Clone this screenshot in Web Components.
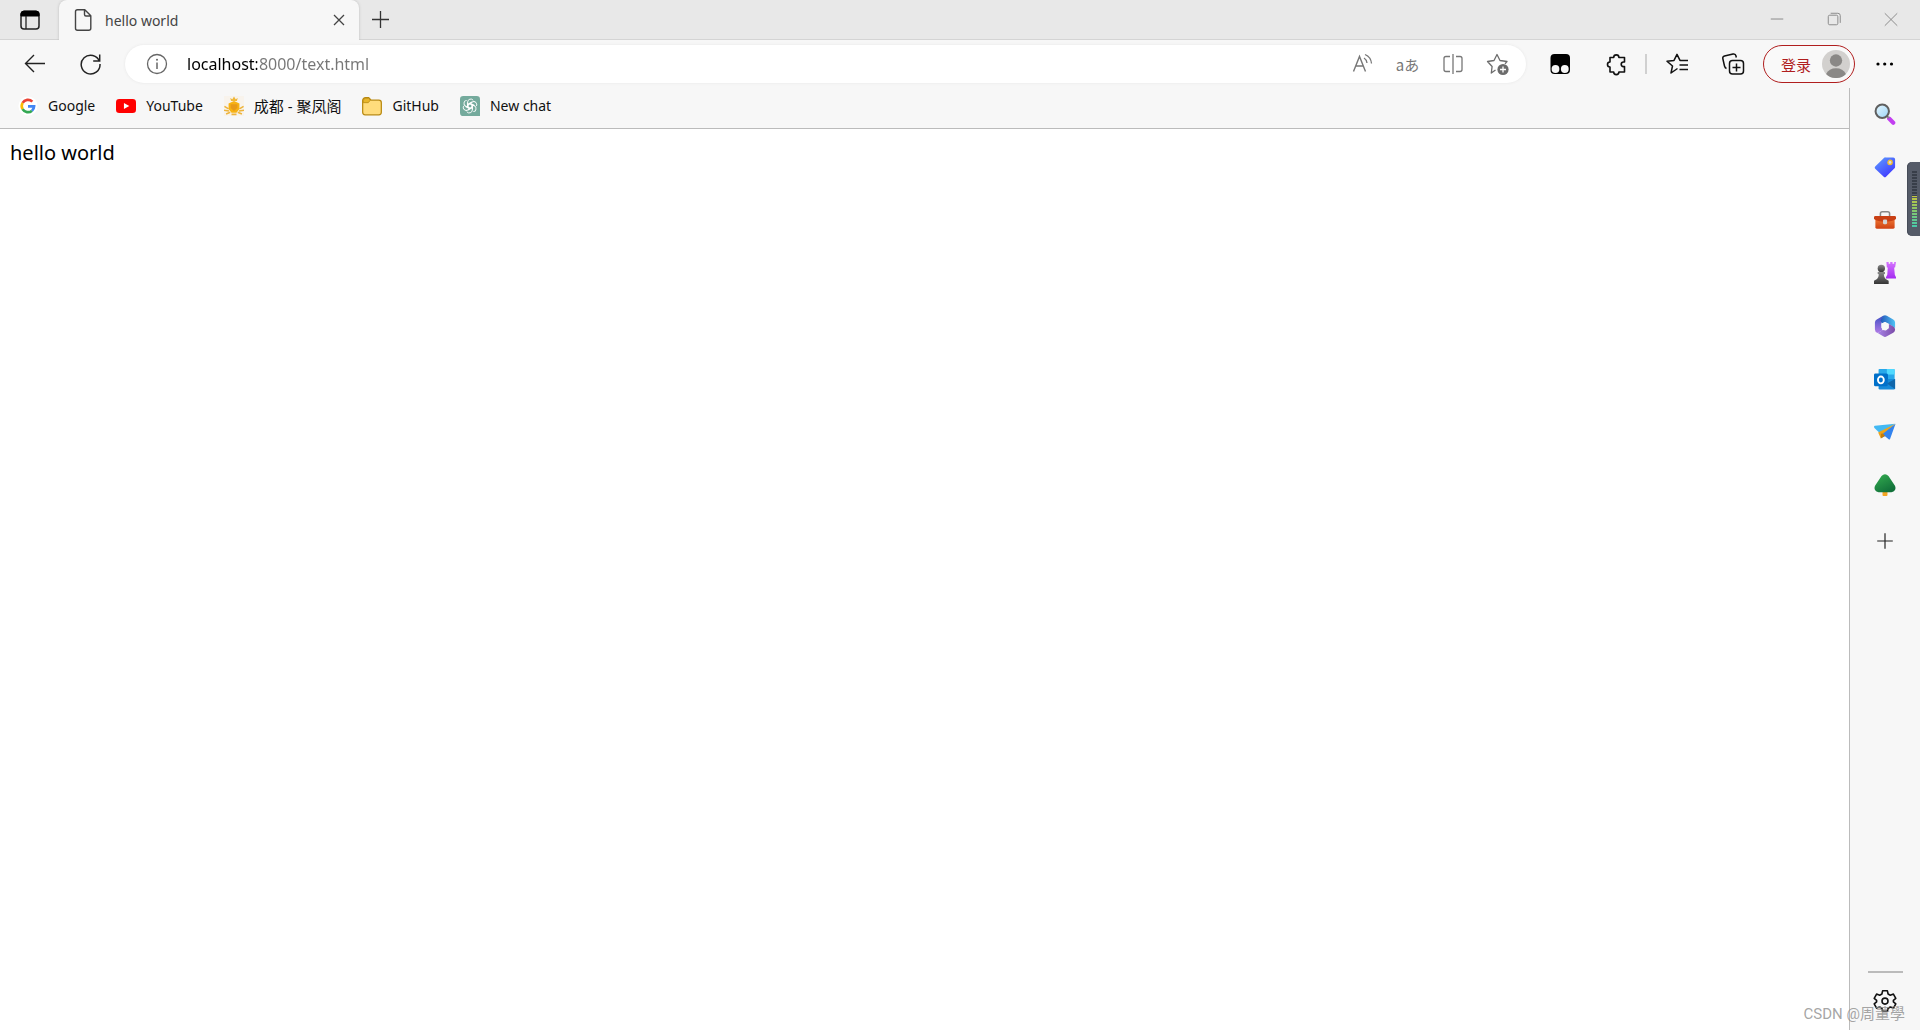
<!DOCTYPE html>
<html lang="zh-CN">
<head>
<meta charset="utf-8">
<title>hello world</title>
<style>
html, body { height: 100%; }
body { margin: 0; font-family: "Noto Sans", "Noto Sans CJK SC", sans-serif; color: #1b1b1b; overflow: hidden; }
</style>
</head>
<body>
<browser-window>
  <title-bar slot="title"><browser-tab>hello world</browser-tab></title-bar>
  <tool-bar slot="tools"></tool-bar>
  <bookmark-bar slot="bookmarks">
    <bookmark-link icon="google">Google</bookmark-link>
    <bookmark-link icon="youtube">YouTube</bookmark-link>
    <bookmark-link icon="crown" lang="zh">成都 - 聚凤阁</bookmark-link>
    <bookmark-link icon="folder">GitHub</bookmark-link>
    <bookmark-link icon="chat">New chat</bookmark-link>
  </bookmark-bar>
  <page-view slot="page">hello world</page-view>
  <side-bar slot="side"></side-bar>
  <level-meter slot="overlay"></level-meter>
  <water-mark slot="overlay">CSDN @周董學</water-mark>
</browser-window>

<script>
const ICONS = {
  panes: '<rect x="3" y="3.5" width="18" height="17.5" rx="3" fill="none" stroke="#222" stroke-width="1.5"/><path d="M3 8V6a3 3 0 0 1 3-3h12a3 3 0 0 1 3 3v2z" fill="#000" stroke="#000"/><path d="M8 8v13" stroke="#222" stroke-width="1.3"/>',
  file: '<path d="M6.500 1.700h7.300l6 6v12.600a2 2 0 0 1-2 2H6.500a2 2 0 0 1-2-2V3.700a2 2 0 0 1 2-2zM13.500 2v4.500a1.500 1.500 0 0 0 1.500 1.500h4.500" fill="none" stroke="#444" stroke-width="1.4" stroke-linejoin="round"/>',
  close: '<path d="M7 7l10 10M17 7l-10 10" stroke="#444" stroke-width="1.3"/>',
  add: '<path d="M12.500 3v17M4 11.500h17" stroke="#333" stroke-width="1.300"/>',
  min: '<path d="M5 11.500h13" stroke="#888" stroke-width="1"/>',
  max: '<rect x="5.500" y="7.500" width="10" height="10" rx="1.500" fill="none" stroke="#888"/><path d="M8 5.500h7.500a2.500 2.500 0 0 1 2.500 2.500v7.500" fill="none" stroke="#888"/>',
  quit: '<path d="M5 5.500l13 13M18 5.500l-13 13" stroke="#888" stroke-width="1"/>',
  back: '<path d="M22 11.500H2.500M11 3L2.500 11.500 11 20" fill="none" stroke="#222" stroke-width="1.400"/>',
  reload: '<path d="M20.500 9.500A9.400 9.400 0 1 0 21 12M20.700 2.500v6.500h-6.500" fill="none" stroke="#222" stroke-width="1.500"/>',
  info: '<circle cx="12" cy="12" r="9.500" fill="none" stroke="#666" stroke-width="1.300"/><path d="M12 10.500v6.500" stroke="#666" stroke-width="1.500"/><circle cx="12" cy="7.700" r="1" fill="#666"/>',
  read: '<path d="M2.500 19.500L8.500 4.500l6 15M4.700 14h7.600" fill="none" stroke="#777" stroke-width="1.400"/><path d="M13 6q2.800 1.800 3 5M14 2.500q6 2.500 6.500 9" fill="none" stroke="#777" stroke-width="1.300"/>',
  split: '<path d="M9 4.500H5a2 2 0 0 0-2 2v11a2 2 0 0 0 2 2H9M15 4.500h4a2 2 0 0 1 2 2v11a2 2 0 0 1-2 2h-4M12 2v20" fill="none" stroke="#777" stroke-width="1.300"/>',
  staradd: '<path d="M9.500 18L5.300 21l.8-6.500L1.500 9.500l6.500-1L11 2.500l3 6 7 1-2 2.300" fill="none" stroke="#6c6c6c" stroke-width="1.300" stroke-linejoin="round"/><circle cx="17" cy="17.500" r="5.600" fill="#6c6c6c"/><path d="M17 14.500v6M14 17.500h6" stroke="#fff" stroke-width="1.300"/>',
  monkey: '<rect x="2.500" y="2" width="19.500" height="20" rx="4" fill="#000"/><circle cx="7.500" cy="17" r="3.900" fill="#f7f7f7"/><circle cx="16.800" cy="17" r="3.900" fill="#f7f7f7"/>',
  puzzle: '<path d="M6 5.500h3.700a2.600 2.600 0 0 1 5.200 0H20.500V10h-1a2.300 2.300 0 0 0 0 4.600h1V20h-5.600a2.600 2.600 0 0 1-5.200 0H6v-5a2.500 2.500 0 0 1 0-5z" fill="none" stroke="#111" stroke-width="1.600" stroke-linejoin="round"/>',
  favs: '<path d="M12.500 16.500L6 21l1.500-7L2 9.200l7-.8 3-6 3 6h8M14.500 13H23M14.500 17.500H23" fill="none" stroke="#111" stroke-width="1.500" stroke-linejoin="round"/>',
  collect: '<rect x="8.500" y="8.500" width="14" height="13.500" rx="3" fill="none" stroke="#111" stroke-width="1.500"/><path d="M15.500 11.500v8M11.500 15.500h8M5.500 16.500Q4 16 3.500 14L1.800 6.500Q1.500 4.500 3.500 4L12 2q2.500-.5 3 2l.3 1.500" fill="none" stroke="#111" stroke-width="1.500"/>',
  dots: '<circle cx="5" cy="12" r="1.600"/><circle cx="11.700" cy="12" r="1.600"/><circle cx="18.500" cy="12" r="1.600"/>',
  person: '<circle cx="12" cy="12" r="12" fill="#d2d0ce"/><circle cx="12" cy="9" r="5.300" fill="#8a8886"/><path d="M3.500 20.500Q6 15.700 12 15.700t8.500 4.800A12 12 0 0 1 3.500 20.500z" fill="#8a8886"/>',
  google: '<circle cx="12" cy="12" r="11.500" fill="#fff"/><g fill="none" stroke-width="3.200"><path d="M5.500 8.300A7.400 7.400 0 0 1 17.200 6.800" stroke="#ea4335"/><path d="M5.500 8.300a7.400 7.400 0 0 0 0 7.400" stroke="#fbbc05"/><path d="M5.500 15.700a7.400 7.400 0 0 0 11.300 1.900" stroke="#34a853"/><path d="M16.800 17.600a7.400 7.400 0 0 0 2.500-5.200H12" stroke="#4285f4"/></g>',
  youtube: '<rect x="0" y="3.500" width="24" height="17" rx="4" fill="#f00"/><path d="M9.500 8.500l6.500 3.500-6.500 3.500z" fill="#fff"/>',
  crown: '<rect width="24" height="24" fill="#f8f3ec"/><path d="M7.500 2.500L10 4l2-3.500L14 4l2.500-1.500L15.500 6h-7z" fill="#f0b83a"/><path d="M5.500 9L12 6l6.500 3v6.500L15 20H9l-3.500-4.500z" fill="#f7b213"/><path d="M8 10h8v4.500L12 18l-4-3.500z" fill="#e79a18"/><path d="M.5 12.500l5 3M0 17l6 1M2.500 21.500l5-2M23.500 12.500l-5 3M24 17l-6 1M21.500 21.500l-5-2M9 22h6" stroke="#edb43c" stroke-width="1.900"/>',
  folder: '<path d="M.8 5.500A3.500 3.500 0 0 1 4.300 2H8l3 3h9.200a3 3 0 0 1 3 3v11.500a3 3 0 0 1-3 3H3.800a3 3 0 0 1-3-3z" fill="#ffdc7c" stroke="#b98a12" stroke-width="1.500"/><path d="M1.500 8V5.500a3 3 0 0 1 3-2.800h3.200L10 5 7.500 8z" fill="#e8b62c" stroke="#b98a12"/>',
  chat: '<path d="M4 0h16a4 4 0 0 1 4 4v20H4a4 4 0 0 1-4-4V4a4 4 0 0 1 4-4z" fill="#74aa9c"/><g fill="none" stroke="#fff" stroke-width="1.100">' +
    [0, 60, 120, 180, 240, 300].map(a => '<path d="M14.400 13.300L12 14.800l-2.800-1.500V7.200a3.700 3.700 0 0 1 6.700-2M9.300 10l4.800-2.800" transform="rotate(' + a + ' 12 12)"/>').join('') + '</g>',
  search: '<defs><linearGradient id="g" x2="1" y2="1"><stop stop-color="#e6f7ff"/><stop offset="1" stop-color="#9cd4f7"/></linearGradient></defs><path d="M16.500 17l4.500 4.500" stroke="#c23ff0" stroke-width="4.500" stroke-linecap="round"/><path d="M14 14l2.500 2.500" stroke="#888" stroke-width="2"/><circle cx="9" cy="9" r="7.300" fill="url(#g)" stroke="#606060" stroke-width="2.200"/>',
  tag: '<defs><linearGradient id="g" x2=".7" y2="1"><stop stop-color="#5ea0ff"/><stop offset="1" stop-color="#4038ff"/></linearGradient></defs><path d="M12.500 1.500H21a2 2 0 0 1 2 2V12a2 2 0 0 1-.6 1.400l-9.300 9.200a1.800 1.800 0 0 1-2.500 0L1.300 14a1.800 1.800 0 0 1 0-2.500l9.500-9.300A2 2 0 0 1 12.500 1.500z" fill="url(#g)"/><circle cx="17.500" cy="7" r="2.300" fill="#ddd" stroke="#f4bc2b" stroke-width="1.500"/>',
  toolbox: '<defs><linearGradient id="g" x2="0" y2="1"><stop stop-color="#f07a35"/><stop offset="1" stop-color="#cf4213"/></linearGradient></defs><path d="M7 8V5a2 2 0 0 1 2-2h6a2 2 0 0 1 2 2V8" fill="none" stroke="#888" stroke-width="1.700"/><path d="M1.500 10h21v10a1.500 1.500 0 0 1-1.500 1.500H3A1.500 1.500 0 0 1 1.500 20z" fill="url(#g)"/><path d="M1.500 7.500h21a1.500 1.500 0 0 1 1.500 1.500v2q-4 3-12 3T0 11V9a1.500 1.500 0 0 1 1.500-1.500z" fill="#c94015"/><rect x="9.800" y="11.500" width="4.500" height="5" rx="1.200" fill="#d4d4d4"/>',
  chess: '<defs><linearGradient id="g" x2="0" y2="1"><stop stop-color="#8a8a8a"/><stop offset="1" stop-color="#343434"/></linearGradient><linearGradient id="h" x2="0" y2="1"><stop stop-color="#d574ff"/><stop offset="1" stop-color="#a42cf0"/></linearGradient></defs><path d="M13.500 0H16v2h1.700V0h2.500v2H22V0h2l-1 6h-1l.7 8 1.300 2.500v1.500H13v-1.500l1.500-2.500.5-8h-1z" fill="url(#h)"/><circle cx="8" cy="7" r="4" fill="url(#g)"/><path d="M4 10.800h8v2l-1.300.8q.3 3.400 2 4.900l3.300 2V24H0v-3.500l3.300-2q1.700-1.500 2-4.900L4 12.800z" fill="url(#g)"/>',
  office: '<defs><linearGradient id="g" x2="0" y2="1"><stop stop-color="#3f4fc4"/><stop offset="1" stop-color="#b07be6"/></linearGradient><linearGradient id="h" x2="1"><stop stop-color="#2456b8"/><stop offset="1" stop-color="#4fc3f5"/></linearGradient><linearGradient id="i" x2="1"><stop stop-color="#a884e6"/><stop offset="1" stop-color="#7a4ba8"/></linearGradient></defs><path d="M10 .8L3 4.800a4 4 0 0 0-2 3.500v7.500a4 4 0 0 0 3 3.800l5-2.800-1-8z" fill="url(#g)"/><path d="M10 .8a4 4 0 0 1 4 0l7 4a4 4 0 0 1 2 3.500v6L16 9.500 12 7.500 8.500 9 7 6z" fill="url(#h)"/><path d="M4 19.600l5.500-3.200 3.500.6 3-2.500V9.500l5 3a4 4 0 0 1 2 3.500 4 4 0 0 1-2 3.300l-7 4a4 4 0 0 1-4 0z" fill="url(#i)"/><path d="M12 7.700l4 2.200v4.300l-4 2.300-4-2.300V9.900z" fill="#f7f7f7"/>',
  outlook: '<path d="M6 1h15.500a1 1 0 0 1 1 1v10H5V2a1 1 0 0 1 1-1z" fill="#28a8ea"/><path d="M14 1h7.500a1 1 0 0 1 1 1v5H14z" fill="#50d9ff"/><path d="M6 7h9v6H6z" fill="#0364b8"/><path d="M5 12h18v10a1.500 1.500 0 0 1-1.500 1.500h-15A1.500 1.500 0 0 1 5 22z" fill="#168ad9"/><path d="M23 12v11l-9-6z" fill="#1066aa"/><rect x="0" y="6" width="15" height="14" rx="1.500" fill="#0070c9"/><ellipse cx="7.500" cy="13" rx="3.200" ry="3.700" fill="none" stroke="#fff" stroke-width="2"/>',
  plane: '<path d="M0 6.500q0-1 1-1.200L23 3 7 14 .5 7.500z" fill="#43b9f3"/><path d="M23.500 3L17.500 19.500q-.6 1-1.500.3L12 16.500l-4 2 1.500-6z" fill="#3383ee"/><path d="M23.500 3L4.500 12.500l3 6.500 2.200-5z" fill="#eda41c"/><path d="M7.500 19v-5l2.200-.5L12 16z" fill="#c77d08"/>',
  tree: '<defs><linearGradient id="g" x2=".6" y2="1"><stop stop-color="#35ae50"/><stop offset="1" stop-color="#12713a"/></linearGradient></defs><path d="M9.300 18h5.400v5a1 1 0 0 1-1 1h-3.400a1 1 0 0 1-1-1z" fill="#f5a623"/><path d="M12 .2q2 0 3.800 2L22.700 12.500q1.500 3 0 5.300-1 2-3.700 2H5q-2.700 0-3.700-2-1.500-2.300 0-5.300L8.200 2.200Q10 .2 12 .2z" fill="url(#g)"/>',
  plus: '<path d="M12 3.500v17M3.500 12h17" stroke="#222" stroke-width="1.300"/>',
  gear: '<path d="M9.600 1.800h4.800l.7 3.200 2.200 1.200 3.100-1.100 2.400 4.200-2.400 2v1.600l2.400 2-2.400 4.200-3.100-1.100-2.200 1.200-.7 3.200H9.600l-.7-3.200-2.200-1.200-3.100 1.100-2.400-4.200 2.400-2v-1.600l-2.400-2 2.400-4.200 3.100 1.100L8.900 5z" fill="none" stroke="#111" stroke-width="1.600" stroke-linejoin="round"/><circle cx="12" cy="12.100" r="3" fill="none" stroke="#111" stroke-width="1.600"/>'
};

const define = (name, html, ready) => customElements.define(name, class extends HTMLElement {
  constructor() {
    super();
    const t = document.createElement('template');
    t.innerHTML = html;
    this.attachShadow({ mode: 'open' }).append(t.content.cloneNode(true));
  }
  connectedCallback() { if (ready) ready(this, this.shadowRoot); }
});

define('ui-icon', '<style>:host{display:block;width:var(--icon,24px);height:var(--icon,24px);flex:none}svg{display:block;width:100%;height:100%}</style><svg viewBox="0 0 24 24" aria-hidden="true"></svg>',
  (el, root) => { root.querySelector('svg').innerHTML = ICONS[el.getAttribute('name')]; });

define('icon-button', `<style>
:host{display:flex;width:56px;height:38px;flex:none}
button{all:unset;flex:1;display:flex;align-items:center;justify-content:center;font:15px "Noto Sans CJK JP",sans-serif;color:#777}
</style><button type="button"><slot></slot></button>`,
  (el, root) => root.querySelector('button').setAttribute('aria-label', el.getAttribute('label')));

define('browser-window', `<style>
:host{display:flex;flex-direction:column;min-height:100vh;position:relative;background:#f7f7f7}
.body{flex:1;display:flex}
.main{flex:1;min-width:0;display:flex;flex-direction:column}
</style><slot name="title"></slot><slot name="tools"></slot>
<div class="body"><div class="main"><slot name="bookmarks"></slot><slot name="page"></slot></div><slot name="side"></slot></div>
<slot name="overlay"></slot>`);

define('title-bar', `<style>
:host{display:flex;height:40px;background:#e8e8e8;box-shadow:inset 0 -1px #d4d4d4}
.gap{flex:1}
icon-button{height:39px;width:57px}
.lead{width:59px}
.new{width:42px}
.win{--icon:23px}
</style>
<icon-button class="lead" label="标签操作"><ui-icon name="panes"></ui-icon></icon-button>
<slot></slot>
<icon-button class="new" label="新建标签页"><ui-icon name="add"></ui-icon></icon-button>
<div class="gap"></div>
<icon-button class="win" label="最小化"><ui-icon name="min"></ui-icon></icon-button>
<icon-button class="win" label="还原"><ui-icon name="max"></ui-icon></icon-button>
<icon-button class="win" label="关闭"><ui-icon name="quit"></ui-icon></icon-button>`);

define('browser-tab', `<style>
:host{display:flex;align-items:center;width:300px;box-sizing:border-box;height:40px;padding-left:12px;background:#f7f7f7;border-radius:8px 8px 0 0;box-shadow:0 0 3px #bbb;clip-path:inset(0 -4px 0 -4px);font-size:14px;color:#444}
span{flex:1;margin-left:10px}
icon-button{width:40px}
</style><ui-icon name="file"></ui-icon><span><slot></slot></span><icon-button label="关闭标签页"><ui-icon name="close"></ui-icon></icon-button>`);

define('tool-bar', `<style>
:host{display:flex;align-items:center;height:48px;padding:0 7px;box-sizing:border-box;background:#f7f7f7}
.rule{width:2px;height:20px;background:#d0d0d0;margin:0 2px 0 1px}
address-bar{flex:1;margin:0 6px}
login-button{margin:0 2px}
</style>
<icon-button label="返回"><ui-icon name="back"></ui-icon></icon-button>
<icon-button label="刷新"><ui-icon name="reload"></ui-icon></icon-button>
<address-bar></address-bar>
<icon-button label="Tampermonkey"><ui-icon name="monkey"></ui-icon></icon-button>
<icon-button label="扩展"><ui-icon name="puzzle"></ui-icon></icon-button>
<div class="rule"></div>
<icon-button label="收藏夹"><ui-icon name="favs"></ui-icon></icon-button>
<icon-button label="集锦"><ui-icon name="collect"></ui-icon></icon-button>
<login-button>登录</login-button>
<icon-button label="设置及其他"><ui-icon name="dots"></ui-icon></icon-button>`);

define('address-bar', `<style>
:host{display:flex;align-items:center;height:38px;box-sizing:border-box;padding:0 6px 0 10px;border-radius:19px;background:#fff;box-shadow:0 0 3px #e6e6e6}
.info{width:44px}
icon-button{width:45px}
input{flex:1;min-width:0;height:30px;border:0;padding:0;margin-left:8px;outline:0;font:16px/30px "Noto Sans",sans-serif;color:#767676;-webkit-text-fill-color:transparent;background:linear-gradient(90deg,#000 70px,#767676 70px) text}
</style>
<icon-button class="info" label="查看站点信息"><ui-icon name="info"></ui-icon></icon-button>
<input type="text" aria-label="地址" value="localhost:8000/text.html" spellcheck="false">
<icon-button label="大声朗读"><ui-icon name="read"></ui-icon></icon-button>
<icon-button label="翻译">aあ</icon-button>
<icon-button label="分屏"><ui-icon name="split"></ui-icon></icon-button>
<icon-button label="添加到收藏夹"><ui-icon name="staradd"></ui-icon></icon-button>`);

define('login-button', `<style>
:host{display:block;flex:none}
button{display:flex;align-items:center;justify-content:space-between;width:92px;height:38px;padding:0 4px 0 17px;border:1px solid #b01e1e;border-radius:19px;background:#f9f9f9;color:#b01e1e;font:15px "Noto Sans CJK SC",sans-serif;--icon:28px}
</style><button type="button"><slot></slot><ui-icon name="person"></ui-icon></button>`);

define('bookmark-bar', `<style>
:host{display:flex;align-items:center;gap:21px;height:41px;box-sizing:border-box;padding:0 18px 4px;border-bottom:1px solid #bbb}
</style><slot></slot>`);

define('bookmark-link', `<style>
:host{display:block;font-size:14px}
:host([lang=zh]){font-size:15px}
a{display:flex;align-items:center;gap:10px;line-height:20px;color:#111;text-decoration:none;white-space:nowrap;--icon:20px}
</style><a href="#"><ui-icon></ui-icon><span><slot></slot></span></a>`,
  (el, root) => { const i = document.createElement('ui-icon'); i.setAttribute('name', el.getAttribute('icon')); root.querySelector('ui-icon').replaceWith(i); });

define('page-view', `<style>
:host{display:block;flex:1;padding:10px;background:#fff;color:#000;font-size:20px;line-height:28px}
</style><slot></slot>`);

define('side-bar', `<style>
:host{display:flex;flex-direction:column;width:71px;box-sizing:border-box;border-left:1px solid #bbb;background:#f7f7f7}
nav{display:flex;flex-direction:column;align-items:center;gap:15px;padding:7px 1px 0 0;flex:1;--icon:22px}
.more{margin-top:3px}
footer{display:flex;flex-direction:column;align-items:center;gap:9px;padding-bottom:10px}
.rule{width:35px;height:2px;background:#bbb}
</style>
<nav></nav>
<footer><div class="rule"></div><icon-button label="设置"><ui-icon name="gear"></ui-icon></icon-button></footer>`,
  (el, root) => {
    const items = { search: '搜索', tag: '购物', toolbox: '工具', chess: '游戏', office: 'Microsoft 365', outlook: 'Outlook', plane: 'Drop', tree: 'E-tree', plus: '自定义' };
    root.querySelector('nav').innerHTML = Object.entries(items).map(([n, l]) => '<icon-button label="' + l + '"' + (n === 'plus' ? ' class="more"' : '') + '><ui-icon name="' + n + '"></ui-icon></icon-button>').join('');
  });

define('level-meter', `<style>
:host{position:absolute;right:0;top:162px;width:13px;height:74px;box-sizing:border-box;padding:9px 3px 8px 5px;border-radius:5px 0 0 5px;background:#555b68;box-shadow:inset 1px 0 #464c58}
div{height:100%;background:repeating-linear-gradient(transparent 0 2px,#555b68 2px 3px),linear-gradient(#383e49 0 43%,#c8c83c 43%,#8fc763 65%,#43c9ae)}
</style><div></div>`);

define('water-mark', `<style>
:host{position:absolute;right:15px;bottom:6px;font:15px/20px Roboto,"Noto Sans CJK TC",sans-serif;color:#8e8e8ecc;pointer-events:none}
</style><slot></slot>`);
</script>
</body>
</html>
